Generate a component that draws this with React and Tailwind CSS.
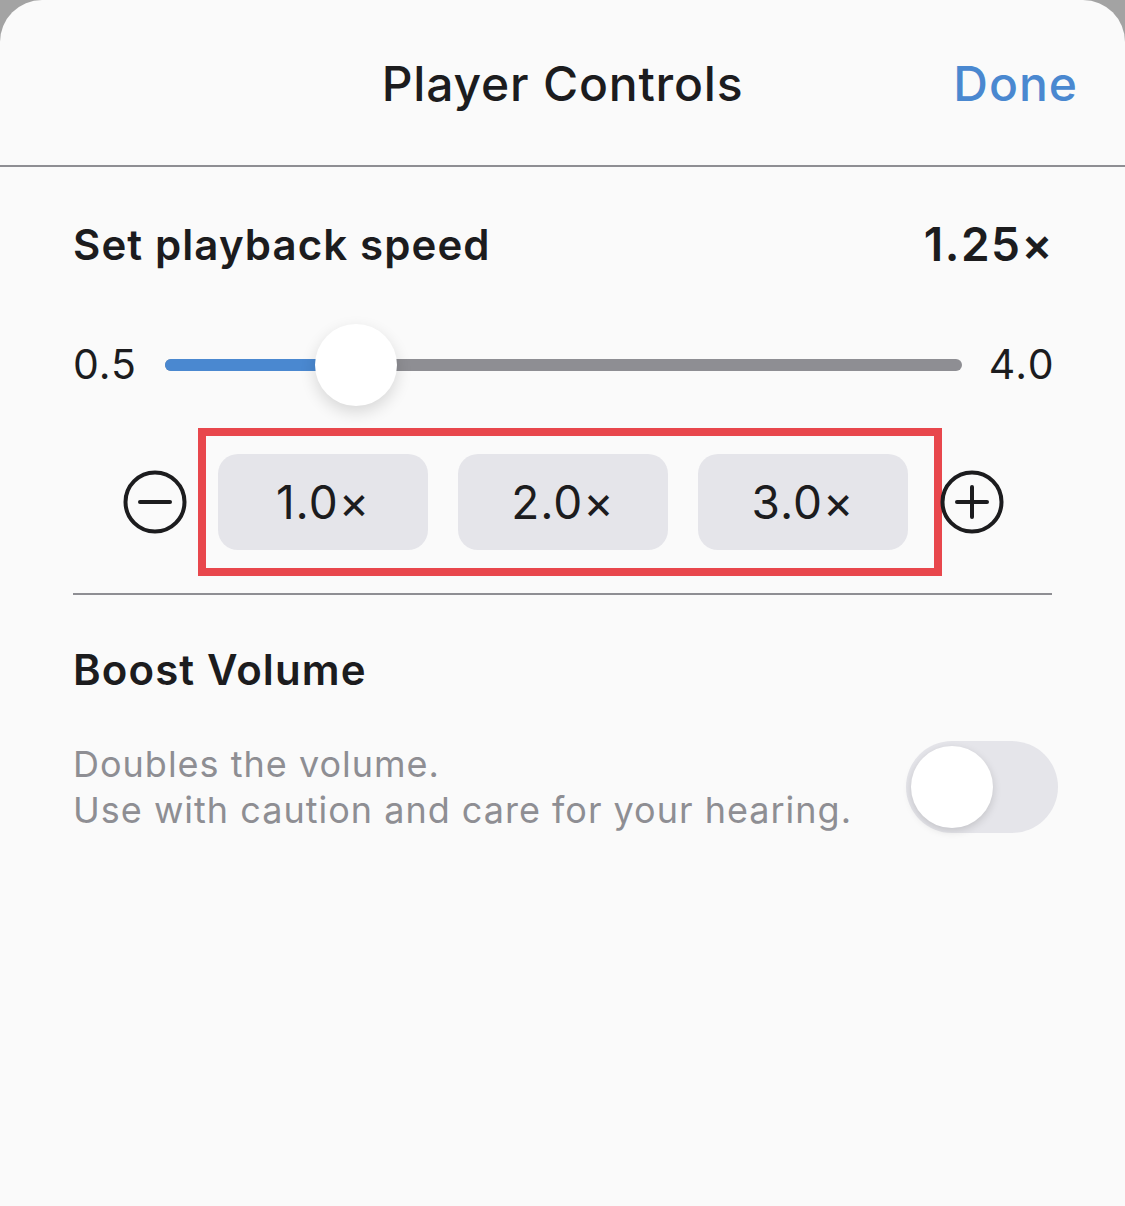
import React from 'react';

const font = { fontFamily: 'Inter, "Noto Sans", sans-serif' };

const CircleButton = ({ plus }) => (
  <svg width="64" height="64" viewBox="0 0 64 64" className="shrink-0">
    <circle cx="32" cy="32" r="29.5" fill="none" stroke="#1c1c1e" strokeWidth="4" />
    <line x1="17" y1="32" x2="47" y2="32" stroke="#1c1c1e" strokeWidth="4" strokeLinecap="round" />
    {plus && <line x1="32" y1="17" x2="32" y2="47" stroke="#1c1c1e" strokeWidth="4" strokeLinecap="round" />}
  </svg>
);

const App = () => {
  const presets = ['1.0×', '2.0×', '3.0×'];

  return (
    <div className="w-[1125px] h-[1206px] bg-[#a3a3a3] text-[#1c1c1e]" style={font}>
      <div className="h-full bg-[#fafafa] rounded-t-[42px] flex flex-col">
        {/* header */}
        <div className="relative h-[167px] flex items-center justify-center border-b-2 border-[#8e8e93]">
          <span className="text-[48px] font-medium tracking-[0.8px] pt-[2px]">Player Controls</span>
          <span className="absolute right-[47px] inset-y-0 pt-[2px] flex items-center text-[48px] font-medium tracking-[1px] text-[#4a88d0]">
            Done
          </span>
        </div>

        <div className="px-[73px]">
          {/* speed */}
          <div className="flex items-center justify-between mt-[49px] h-[56px]">
            <span className="text-[42px] font-semibold tracking-[1.1px]">Set playback speed</span>
            <span className="text-[46px] font-semibold tracking-[1.5px] mr-[-2px]">1.25×</span>
          </div>

          <div className="flex items-center mt-[51px] h-[84px]">
            <span className="text-[41px] tracking-[1px] w-[92px]">0.5</span>
            <div className="relative flex-1 h-[12px] rounded-full bg-[#8e8e93] mr-[27px]">
              <div className="absolute left-0 top-0 h-full w-[170px] rounded-l-full bg-[#4a88d0]" />
              <div className="absolute left-[150px] top-[-35px] w-[82px] h-[82px] rounded-full bg-white shadow-[0_6px_16px_rgba(0,0,0,0.14)]" />
            </div>
            <span className="text-[41px] tracking-[1.5px] mr-[-3px]">4.0</span>
          </div>

          <div className="flex items-center mt-[21px] ml-[50px]">
            <CircleButton />
            <div className="ml-[11px] border-[8px] border-[#e8474c] w-[744px] h-[148px] flex items-center gap-[30px] pl-[12px]">
              {presets.map((p) => (
                <div
                  key={p}
                  className="w-[210px] h-[96px] rounded-[20px] bg-[#e5e5ea] flex items-center justify-center text-[46px] tracking-[1px]"
                >
                  {p}
                </div>
              ))}
            </div>
            <div className="ml-[-2px]">
              <CircleButton plus />
            </div>
          </div>

          <div className="mt-[17px] border-t-2 border-[#8e8e93]" />

          {/* boost volume */}
          <div className="mt-[43px] text-[42px] font-semibold tracking-[1.1px]">Boost Volume</div>

          <div className="flex items-center justify-between mt-[40px]">
            <div className="text-[36px] leading-[46px] tracking-[1px] text-[#8e8e93]">
              <div>Doubles the volume.</div>
              <div>Use with caution and care for your hearing.</div>
            </div>
            <div className="w-[152px] h-[92px] rounded-full bg-[#e5e5ea] p-[5px] mr-[-6px]">
              <div className="w-[82px] h-[82px] rounded-full bg-white shadow-[0_3px_8px_rgba(0,0,0,0.15)]" />
            </div>
          </div>
        </div>
      </div>
    </div>
  );
};

export default App;
